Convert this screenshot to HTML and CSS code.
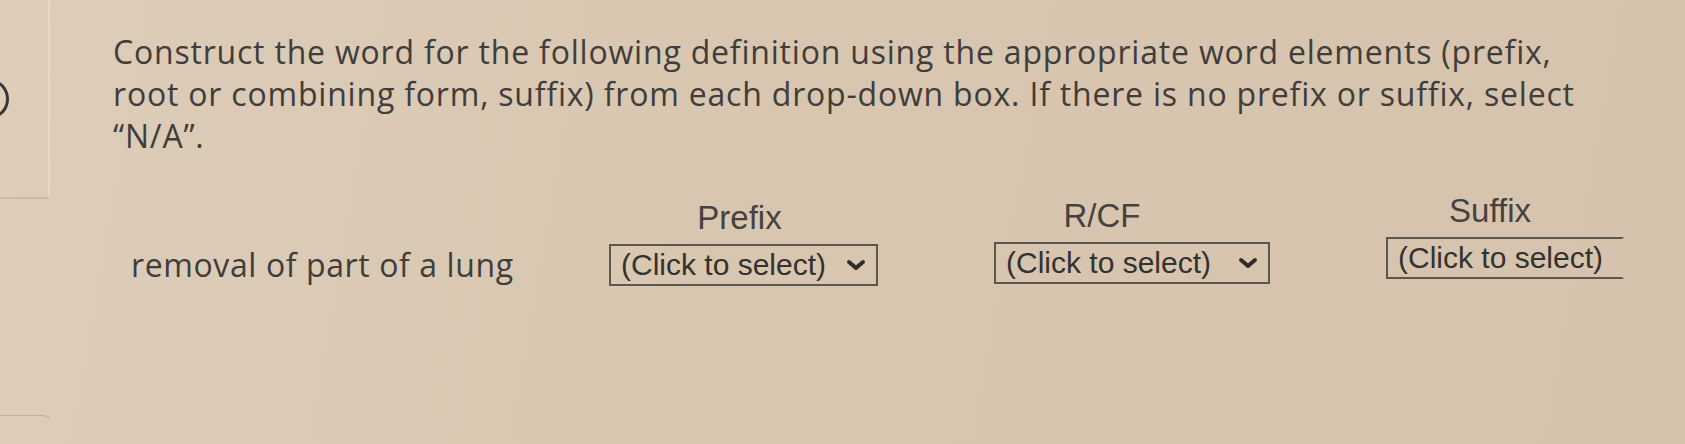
FILE: index.html
```html
<!DOCTYPE html>
<html lang="en">
<head>
    <meta charset="UTF-8">
    <meta name="viewport" content="width=device-width, initial-scale=1.0">
    <title>Word Building</title>
    <link rel="stylesheet" href="styles.css">
</head>
<body>
    <div class="page">
        <div class="rail">
            <div class="rail-edge">
                <div class="rail-knob"></div>
            </div>
            <div class="rail-tab"></div>
        </div>
        <div class="content">
            <p class="prompt">Construct the word for the following definition using the appropriate word elements (prefix, root or combining form, suffix) from each drop-down box. If there is no prefix or suffix, select &ldquo;N/A&rdquo;.</p>

            <div class="question">
                <div class="definition">removal of part of a lung</div>

                <div class="field field-prefix">
                    <div class="field-label">Prefix</div>
                    <div class="picker picker-prefix">
                        <span>(Click to select)</span>
                        <svg class="chevron" viewBox="0 0 20 12" width="20" height="12"><polyline points="3,3 10,9 17,3"/></svg>
                    </div>
                </div>

                <div class="field field-root">
                    <div class="field-label">R/CF</div>
                    <div class="picker picker-root">
                        <span>(Click to select)</span>
                        <svg class="chevron" viewBox="0 0 20 12" width="20" height="12"><polyline points="3,3 10,9 17,3"/></svg>
                    </div>
                </div>

                <div class="field field-suffix">
                    <div class="field-label">Suffix</div>
                    <div class="picker picker-suffix">
                        <span>(Click to select)</span>
                    </div>
                </div>
            </div>
        </div>
    </div>
</body>
</html>
```

FILE: styles.css
```css
body {
    margin: 0;
    height: 444px;
    overflow: hidden;
    background: linear-gradient(100deg, #ddcdb9 0%, #d8c6b0 45%, #d6c3ad 100%);
    font-family: "Open Sans", "Liberation Sans", sans-serif;
    color: #3d3b39;
}
.page {
    display: flex;
    height: 100%;
}
/* thin left rail of the quiz frame */
.rail {
    width: 50px;
    display: flex;
    flex-direction: column;
    justify-content: space-between;
    overflow: hidden;
}
.rail-edge {
    height: 197px;
    display: flex;
    flex-direction: column;
    border-right: 2px solid rgba(236, 226, 212, 0.6);
    border-bottom: 2px solid rgba(190, 176, 160, 0.6);
}
.rail-knob {
    width: 28px;
    height: 32px;
    margin-top: 80px;
    margin-left: -25px;
    border: 3px solid #3a3633;
    border-radius: 50%;
}
.rail-tab {
    height: 28px;
    width: 52px;
    border: 1px solid rgba(180, 166, 150, 0.7);
    border-left: none;
    border-bottom: none;
    border-radius: 0 10px 0 0;
}
.content {
    padding-left: 63px;
    padding-top: 31px;
}
.prompt {
    margin: 0;
    width: 1500px;
    font-size: 32px;
    letter-spacing: 0.8px;
    line-height: 42px;
    color: #403d3a;
}
/* definition row with the three drop-downs */
.question {
    display: flex;
    align-items: flex-end;
    margin-top: 35px;
}
.definition {
    width: 496px;
    padding-left: 18px;
    box-sizing: border-box;
    font-size: 32px;
    letter-spacing: 0.6px;
    line-height: 36px;
    margin-bottom: 3px;
    white-space: nowrap;
    color: #403d3a;
}
.field {
    display: flex;
    flex-direction: column;
    align-items: center;
    font-family: "Liberation Sans", Arial, sans-serif;
}
.field + .field {
    margin-left: 116px;
}
.field-label {
    font-size: 33px;
    line-height: 38px;
    color: #45423f;
    margin-bottom: 7px;
}
.field-prefix .field-label {
    margin-right: 8px;
}
.field-root {
    margin-bottom: 2px;
}
.field-root .field-label {
    margin-right: 60px;
}
.field-suffix {
    margin-bottom: 7px;
}
.field-suffix .field-label {
    margin-right: 30px;
}
.picker {
    display: flex;
    align-items: center;
    justify-content: space-between;
    height: 42px;
    padding: 0 10px;
    box-sizing: border-box;
    border: 2px solid #5a5650;
    font-size: 30px;
    color: #34322f;
    cursor: pointer;
}
.picker-prefix {
    width: 269px;
}
.picker-root {
    width: 276px;
}
.picker-suffix {
    width: 238px;
    border-right-color: transparent;
}
.chevron {
    fill: none;
    stroke: #2f2d2b;
    stroke-width: 4;
    stroke-linecap: round;
    stroke-linejoin: round;
}
```
